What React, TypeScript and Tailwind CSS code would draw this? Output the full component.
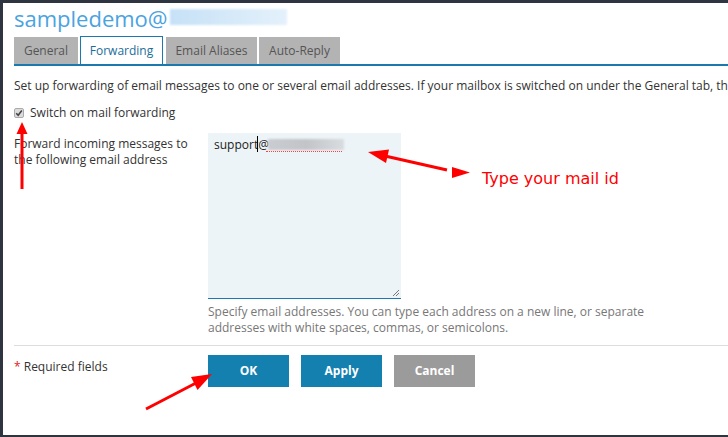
import React from "react";

export default function App() {
  return (
    <div
      className="relative w-[728px] h-[437px] overflow-hidden bg-[#2f3441] pt-[3px] pl-[3px] pb-[2px] flex"
      style={{ fontFamily: '"Open Sans", sans-serif' }}
    >
      <div className="flex-1 bg-white pl-[11px] flex flex-col overflow-hidden">
        {/* Title */}
        <div className="h-[34px] flex items-start">
          <div className="relative text-[22px] leading-[30px] text-[#4aa3df] whitespace-nowrap">
            sampledemo@
            <span className="absolute left-[156px] top-[6px] w-[117px] h-[16px] bg-gradient-to-r from-[#c6e1f7] to-[#e4f1fb] blur-[1px]" />
          </div>
        </div>
        {/* Tabs */}
        <div className="flex items-end h-[29px] border-b-2 border-[#1a7ab0]">
          <div className="w-[64px] h-[27px] mr-[2px] bg-[#b3b3b3] text-[#555] text-[12px] leading-[27px] text-center">General</div>
          <div className="w-[83px] h-[28px] mr-[3px] bg-white border border-b-0 border-[#1a7ab0] text-[#1b6d9a] text-[12px] leading-[27px] text-center">Forwarding</div>
          <div className="w-[91px] h-[27px] mr-[2px] bg-[#b3b3b3] text-[#555] text-[12px] leading-[27px] text-center">Email Aliases</div>
          <div className="w-[81px] h-[27px] bg-[#b3b3b3] text-[#555] text-[12px] leading-[27px] text-center">Auto-Reply</div>
        </div>
        {/* Description */}
        <div className="mt-[12px] text-[12px] leading-[16px] text-[#333] whitespace-nowrap">
          Set up forwarding of email messages to one or several email addresses. If your mailbox is switched on under the General tab, the
        </div>
        {/* Checkbox */}
        <div className="mt-[11px] flex items-center h-[16px] text-[12px] text-[#333]">
          <span className="w-[10px] h-[10px] rounded-[2px] bg-[#dcdcdc] border border-[#aaa] flex items-center justify-center mr-[6px]">
            <svg width="8" height="8" viewBox="0 0 8 8">
              <path d="M1.2 4.2 L3.2 6.2 L6.8 1.6" stroke="#444" strokeWidth="1.6" fill="none" />
            </svg>
          </span>
          Switch on mail forwarding
        </div>
        {/* Form row */}
        <div className="mt-[12px] flex">
          <div className="w-[194px] pt-[3px] text-[12px] leading-[16px] text-[#333]">
            Forward incoming messages to<br />the following email address
          </div>
          <div className="flex flex-col">
            <div className="relative w-[193px] h-[166px] bg-[#edf4f7] border-b border-[#1a7ab0] pl-[6px] pt-[3px] text-[12px] leading-[18px] text-[#222]">
              support@
              <span className="absolute left-[49px] top-[3px] w-[1px] h-[16px] bg-black" />
              <span className="absolute left-[60px] top-[6px] w-[76px] h-[11px] bg-gradient-to-r from-[#c9ccd0] via-[#c2c4c8] to-[#d9dde0] blur-[1px]" />
              <span className="absolute left-[58px] top-[17px] w-[76px] h-[2px] border-b border-dotted border-[#ff4040]" />
              <svg className="absolute right-[1px] bottom-[1px]" width="8" height="8" viewBox="0 0 8 8">
                <path d="M1 7 L7 1 M4 7 L7 4" stroke="#555" strokeWidth="0.8" />
              </svg>
            </div>
            <div className="mt-[5px] text-[12px] leading-[16px] text-[#777]">
              Specify email addresses. You can type each address on a new line, or separate<br />
              addresses with white spaces, commas, or semicolons.
            </div>
          </div>
        </div>
        {/* Divider */}
        <div className="mt-[9px] h-px bg-[#dddddd]" />
        {/* Footer */}
        <div className="mt-[9px] flex">
          <div className="w-[194px] text-[12px] leading-[16px] text-[#333] pt-[4px]">
            <span className="text-[#e02020]">*</span> Required fields
          </div>
          <div className="flex gap-[12px]">
            <button className="w-[81px] h-[32px] bg-[#1380b0] text-white text-[12px] font-bold">OK</button>
            <button className="w-[81px] h-[32px] bg-[#1380b0] text-white text-[12px] font-bold">Apply</button>
            <button className="w-[81px] h-[32px] bg-[#9b9b9b] text-white text-[12px] font-bold">Cancel</button>
          </div>
        </div>
      </div>

      {/* Annotations */}
      <svg className="absolute left-0 top-0 pointer-events-none" width="728" height="437" viewBox="0 0 728 437">
        <line x1="22" y1="189" x2="22" y2="130" stroke="#ff0000" strokeWidth="3" />
        <polygon points="22,122 16.5,134 27.5,134" fill="#ff0000" />
        <line x1="447" y1="170" x2="385" y2="156" stroke="#ff0000" strokeWidth="3" />
        <polygon points="368,152 389,149.5 386,163" fill="#ff0000" />
        <polygon points="452,167 470,172.5 452,178" fill="#ff0000" />
        <line x1="146" y1="409" x2="196" y2="383" stroke="#ff0000" strokeWidth="3" />
        <polygon points="212,374 197.5,390 191,377" fill="#ff0000" />
      </svg>
      <div
        className="absolute left-[482px] top-[169px] text-[16px] leading-[20px] text-[#ff0000] whitespace-nowrap"
        style={{ fontFamily: '"DejaVu Sans", sans-serif' }}
      >
        Type your mail id
      </div>
    </div>
  );
}
